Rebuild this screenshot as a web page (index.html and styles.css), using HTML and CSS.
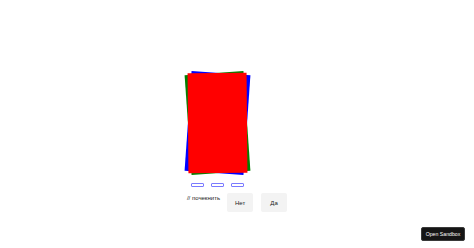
FILE: index.html
```html
<!DOCTYPE html>
<html lang="ru">
<head>
<meta charset="utf-8">
<title>Cards</title>
<link rel="stylesheet" href="styles.css">
</head>
<body>
<main class="stage">
  <div class="column">
    <div class="deck">
      <div class="card card-blue"></div>
      <div class="card card-green"></div>
      <div class="card card-red"></div>
    </div>
    <div class="dots">
      <button class="dot" aria-label="1"></button>
      <button class="dot" aria-label="2"></button>
      <button class="dot" aria-label="3"></button>
    </div>
    <div class="actions">
      <span class="note">// почекнить</span>
      <button class="btn">Нет</button>
      <button class="btn">Да</button>
    </div>
  </div>
</main>
<a class="sandbox" href="#">Open Sandbox</a>
</body>
</html>
```
FILE: styles.css
```css
html, body {
  margin: 0;
  padding: 0;
  background: #ffffff;
  font-family: "Liberation Sans", Arial, sans-serif;
}

.stage {
  display: flex;
  justify-content: center;
  padding-top: 73px;
}

.column {
  display: flex;
  flex-direction: column;
  align-items: flex-start;
}

.deck {
  position: relative;
  width: 59px;
  height: 100px;
  margin-left: 1px;
}

.card {
  position: absolute;
  inset: 0;
}

.card-blue {
  background: #0000ff;
  transform: rotate(4deg);
}

.card-green {
  background: #008000;
  transform: rotate(-4deg);
}

.card-red {
  background: #ff0000;
  transform: rotate(-0.5deg);
}

.dots {
  display: flex;
  justify-content: center;
  gap: 7px;
  width: 59px;
  margin-left: 1px;
  margin-top: 10px;
}

.dot {
  width: 13px;
  height: 4px;
  padding: 0;
  margin: 0;
  border: 1px solid #7a7aff;
  border-radius: 1px;
  background: #ffffff;
}

.actions {
  display: flex;
  align-items: flex-start;
  gap: 7px;
  margin-top: 6px;
}

.note {
  font-size: 6px;
  line-height: 8px;
  color: #222222;
  margin-top: 1px;
}

.btn {
  width: 26px;
  height: 19px;
  padding: 0;
  border: none;
  border-radius: 2px;
  background: #f3f3f3;
  color: #222222;
  font-family: "Liberation Sans", Arial, sans-serif;
  font-size: 6px;
}

.btn + .btn {
  margin-left: 1px;
}

.sandbox {
  position: fixed;
  right: 9px;
  bottom: 7px;
  width: 44px;
  height: 14px;
  box-sizing: border-box;
  display: flex;
  align-items: center;
  justify-content: center;
  background: #151515;
  border: 1px solid #3a3a3a;
  border-radius: 2px;
  color: #ffffff;
  font-size: 5.2px;
  text-decoration: none;
}
```
